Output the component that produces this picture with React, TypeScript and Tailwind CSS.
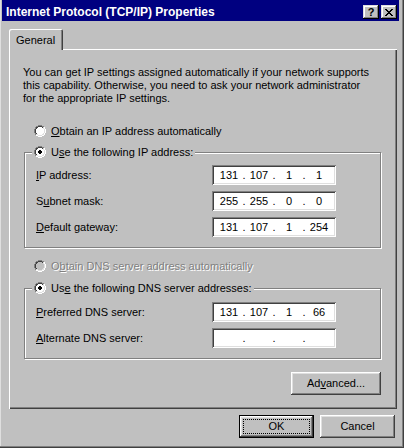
import React from "react";

type Px = { x: number; y: number; c: string };

const OUTER: Record<number, number[]> = {
  0: [4, 5, 6, 7],
  1: [2, 3, 8, 9],
  2: [1, 10],
  3: [1, 10],
  4: [0, 11],
  5: [0, 11],
  6: [0, 11],
  7: [0, 11],
  8: [1, 10],
  9: [1, 10],
  10: [2, 3, 8, 9],
  11: [4, 5, 6, 7],
};
const INNER: Record<number, number[]> = {
  1: [4, 5, 6, 7],
  2: [2, 3, 8, 9],
  3: [2, 9],
  4: [1, 10],
  5: [1, 10],
  6: [1, 10],
  7: [1, 10],
  8: [2, 9],
  9: [2, 3, 8, 9],
  10: [4, 5, 6, 7],
};
const FILL: Record<number, [number, number]> = {
  2: [4, 7],
  3: [3, 8],
  4: [2, 9],
  5: [2, 9],
  6: [2, 9],
  7: [2, 9],
  8: [3, 8],
  9: [4, 7],
};
const DOT: Record<number, [number, number]> = {
  4: [5, 6],
  5: [4, 7],
  6: [4, 7],
  7: [5, 6],
};

function radioPixels(checked: boolean, disabled: boolean): Px[] {
  const px: Px[] = [];
  Object.entries(FILL).forEach(([ys, [a, b]]) => {
    const y = Number(ys);
    for (let x = a; x <= b; x++) px.push({ x, y, c: disabled ? "#c0c0c0" : "#ffffff" });
  });
  Object.entries(OUTER).forEach(([ys, xs]) => {
    const y = Number(ys);
    xs.forEach((x) => px.push({ x, y, c: x + y < 11 ? "#808080" : "#ffffff" }));
  });
  Object.entries(INNER).forEach(([ys, xs]) => {
    const y = Number(ys);
    xs.forEach((x) => px.push({ x, y, c: x + y < 11 ? "#404040" : "#dfdfdf" }));
  });
  if (checked) {
    Object.entries(DOT).forEach(([ys, [a, b]]) => {
      const y = Number(ys);
      for (let x = a; x <= b; x++) px.push({ x, y, c: disabled ? "#808080" : "#000000" });
    });
  }
  return px;
}

function Radio({ checked = false, disabled = false }: { checked?: boolean; disabled?: boolean }) {
  const px = radioPixels(checked, disabled);
  return (
    <svg width="12" height="12" viewBox="0 0 12 12" shapeRendering="crispEdges" className="shrink-0 block">
      {px.map((p, i) => (
        <rect key={i} x={p.x} y={p.y} width="1" height="1" fill={p.c} />
      ))}
    </svg>
  );
}

const CLOSE_ROWS = ["XX....XX", ".XX..XX.", "..XXXX..", "...XX...", "..XXXX..", ".XX..XX.", "XX....XX"];

function CloseGlyph() {
  const rects: { x: number; y: number }[] = [];
  CLOSE_ROWS.forEach((row, y) => row.split("").forEach((ch, x) => ch === "X" && rects.push({ x, y })));
  return (
    <svg width="8" height="7" viewBox="0 0 8 7" shapeRendering="crispEdges" className="block">
      {rects.map((r, i) => (
        <rect key={i} x={r.x} y={r.y} width="1" height="1" fill="#000" />
      ))}
    </svg>
  );
}

function TitleButton({ children }: { children: React.ReactNode }) {
  return (
    <div className="w-[16px] h-[14px] bg-[#c0c0c0] flex items-center justify-center shadow-[inset_-1px_-1px_0_#000,inset_1px_1px_0_#dfdfdf,inset_-2px_-2px_0_#808080,inset_2px_2px_0_#fff]">
      {children}
    </div>
  );
}

function U({ children }: { children: React.ReactNode }) {
  return <span className="underline underline-offset-[1px] decoration-1">{children}</span>;
}

function IpField({ values }: { values: string[] }) {
  return (
    <div className="w-[124px] h-[20px] bg-white flex items-center pl-[4px] shadow-[inset_1px_1px_0_#808080,inset_-1px_-1px_0_#fff,inset_2px_2px_0_#404040,inset_-2px_-2px_0_#dfdfdf]">
      {values.map((v, i) => (
        <React.Fragment key={i}>
          {i > 0 && <span className="w-[4px] text-center leading-[13px]">.</span>}
          <span className="w-[26px] text-center leading-[13px]">{v}</span>
        </React.Fragment>
      ))}
    </div>
  );
}

function FieldRow({ label, values }: { label: React.ReactNode; values: string[] }) {
  return (
    <div className="flex items-center h-[20px] pl-[11px]">
      <div className="w-[176px] leading-[13px] whitespace-nowrap">{label}</div>
      <IpField values={values} />
    </div>
  );
}

function Button({ children, w, isDefault = false }: { children: React.ReactNode; w: string; isDefault?: boolean }) {
  if (isDefault) {
    return (
      <div className={`${w} h-[23px] border border-black bg-[#c0c0c0] flex shadow-[inset_-1px_-1px_0_#404040,inset_1px_1px_0_#fff,inset_-2px_-2px_0_#808080,inset_2px_2px_0_#dfdfdf]`}>
        <div className="flex-1 m-[3px] border border-dotted border-black flex items-center justify-center leading-[13px]">
          {children}
        </div>
      </div>
    );
  }
  return (
    <div className={`${w} h-[23px] bg-[#c0c0c0] flex items-center justify-center leading-[13px] shadow-[inset_-1px_-1px_0_#404040,inset_1px_1px_0_#fff,inset_-2px_-2px_0_#808080,inset_2px_2px_0_#dfdfdf]`}>
      {children}
    </div>
  );
}

export default function App() {
  return (
    <div className="w-[404px] h-[448px] bg-[#c0c0c0] flex flex-col text-[11px] text-black font-['Liberation_Sans',Arial,sans-serif] shadow-[inset_-1px_-1px_0_#404040,inset_-2px_-2px_0_#808080,inset_1px_0_0_#dfdfdf]">
      {/* Title bar */}
      <div className="ml-[2px] w-[397px] h-[21px] shrink-0 bg-[#000080] flex items-start pl-[4px] pr-[2px]">
        <span className="flex-1 mt-[5px] text-white font-bold text-[12px] leading-[14px] whitespace-nowrap">
          Internet Protocol (TCP/IP) Properties
        </span>
        <div className="mt-[5px] flex gap-[2px]">
          <TitleButton>
            <span className="font-bold text-[11px] leading-none mt-[1px]">?</span>
          </TitleButton>
          <TitleButton>
            <CloseGlyph />
          </TitleButton>
        </div>
      </div>

      {/* Tab strip */}
      <div className="mt-[8px] ml-[9px] h-[20px] shrink-0 flex items-start">
        <div className="relative z-10 h-[21px] w-[54px] bg-[#c0c0c0] rounded-tl-[2px] rounded-tr-[2px] pl-[7px] pt-[5px] leading-[13px] shadow-[inset_1px_1px_0_#fff,inset_-1px_0_0_#404040,inset_-2px_0_0_#808080]">
          General
        </div>
      </div>

      {/* Panel */}
      <div className="ml-[9px] w-[388px] h-[360px] shrink-0 flex flex-col pt-[17px] pl-[14px] pr-[16px] shadow-[inset_1px_1px_0_#fff,inset_-1px_-1px_0_#404040,inset_-2px_-2px_0_#808080]">
        <div className="leading-[13px] whitespace-nowrap">
          <div>You can get IP settings assigned automatically if your network supports</div>
          <div>this capability. Otherwise, you need to ask your network administrator</div>
          <div>for the appropriate IP settings.</div>
        </div>

        <div className="mt-[18px] h-[16px] flex items-center gap-[5px] pl-[11px] leading-[13px]">
          <Radio />
          <span>
            <U>O</U>btain an IP address automatically
          </span>
        </div>

        <div className="mt-[13px] ml-[1px] w-[357px] border border-[#808080] shadow-[inset_1px_1px_0_#fff,1px_1px_0_#fff] pb-[10px] flex flex-col">
          <div className="-mt-[9px] ml-[7px] w-fit h-[16px] bg-[#c0c0c0] px-[2px] flex items-center gap-[5px] leading-[13px]">
            <Radio checked />
            <span>
              U<U>s</U>e the following IP address:
            </span>
          </div>
          <div className="mt-[5px] flex flex-col gap-[6px]">
            <FieldRow label={<><U>I</U>P address:</>} values={["131", "107", "1", "1"]} />
            <FieldRow label={<>S<U>u</U>bnet mask:</>} values={["255", "255", "0", "0"]} />
            <FieldRow label={<><U>D</U>efault gateway:</>} values={["131", "107", "1", "254"]} />
          </div>
        </div>

        <div className="mt-[10px] h-[16px] flex items-center gap-[5px] pl-[11px] leading-[13px]">
          <Radio disabled />
          <span className="text-[#808080] [text-shadow:1px_1px_0_#fff]">
            O<U>b</U>tain DNS server address automatically
          </span>
        </div>

        <div className="mt-[14px] ml-[1px] w-[357px] border border-[#808080] shadow-[inset_1px_1px_0_#fff,1px_1px_0_#fff] pb-[10px] flex flex-col">
          <div className="-mt-[9px] ml-[7px] w-fit h-[16px] bg-[#c0c0c0] px-[2px] flex items-center gap-[5px] leading-[13px]">
            <Radio checked />
            <span>
              Us<U>e</U> the following DNS server addresses:
            </span>
          </div>
          <div className="mt-[6px] flex flex-col gap-[6px]">
            <FieldRow label={<><U>P</U>referred DNS server:</>} values={["131", "107", "1", "66"]} />
            <FieldRow label={<><U>A</U>lternate DNS server:</>} values={["", "", "", ""]} />
          </div>
        </div>

        <div className="mt-[13px] flex justify-end">
          <Button w="w-[90px]">
            Ad<U>v</U>anced...
          </Button>
        </div>
      </div>

      {/* Bottom buttons */}
      <div className="mt-[6px] flex justify-end gap-[6px] pr-[9px]">
        <Button w="w-[75px]" isDefault>
          OK
        </Button>
        <Button w="w-[75px]">Cancel</Button>
      </div>
    </div>
  );
}
